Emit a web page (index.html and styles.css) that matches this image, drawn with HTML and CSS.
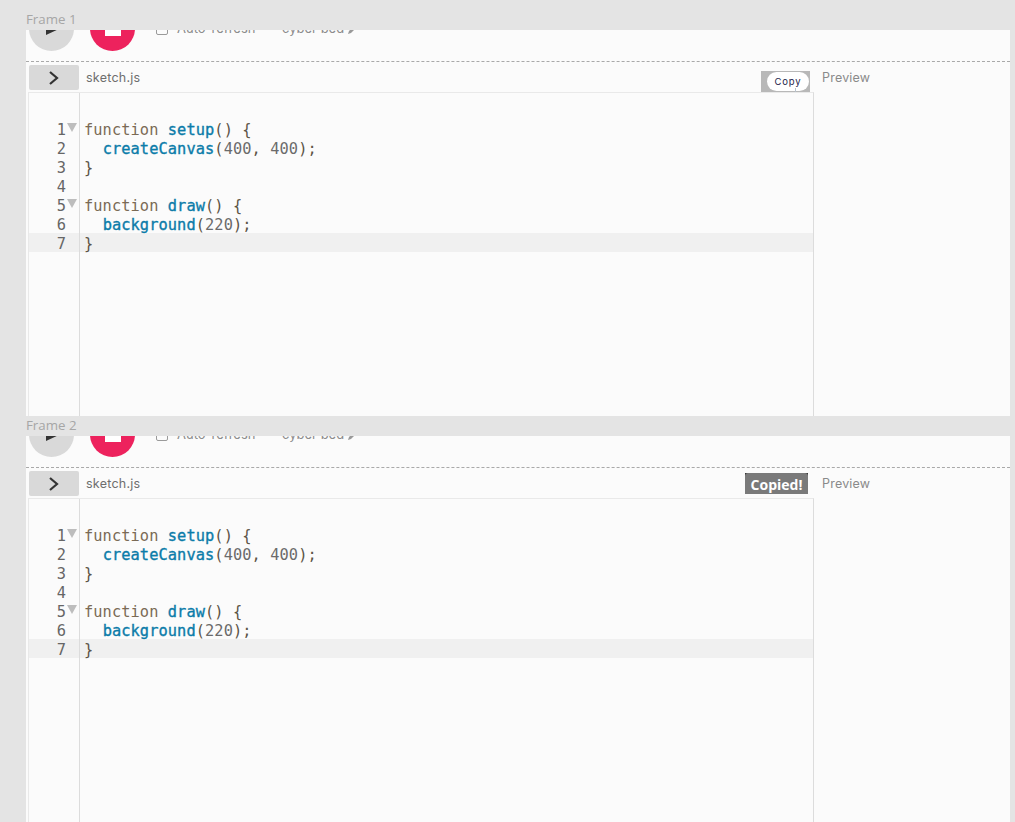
FILE: index.html
```html
<!DOCTYPE html>
<html lang="en">
<head>
<meta charset="utf-8">
<title>Frames</title>
<link rel="stylesheet" href="styles.css">
</head>
<body>
<div class="frame-label first">Frame 1</div>
<section class="frame">
  <div class="toolbar">
    <button class="round play"><svg width="16" height="14" viewBox="0 0 16 14"><path d="M1 0L15 6.5L1 13Z" fill="#333"/></svg></button>
    <button class="round stop"><span class="stop-square"></span></button>
    <span class="check"></span><span class="tool-text auto">Auto-refresh</span>
    <span class="tool-text name">cyber bed</span>
    <svg class="pencil" width="8" height="8" viewBox="0 0 8 8"><path d="M1 7L2 4L5 1L7 3L4 6Z" fill="#999"/></svg>
  </div>
  <div class="workspace">
    <div class="editor-pane">
      <div class="editor-head">
        <button class="collapse"><svg width="10" height="14" viewBox="0 0 10 14"><path d="M1 1L8 7L1 13" fill="none" stroke="#333" stroke-width="2.2"/></svg></button>
        <span class="file">sketch.js</span>
        <div class="copy"><span class="copy-pill">Copy</span><span class="ibeam"></span></div>
      </div>
      <div class="editor">
        <div class="line"><span class="num">1<i class="fold"></i></span><code><span class="kw">function</span> <span class="def">setup</span>() {</code></div>
        <div class="line"><span class="num">2</span><code>  <span class="def">createCanvas</span>(<span class="n">400</span>, <span class="n">400</span>);</code></div>
        <div class="line"><span class="num">3</span><code>}</code></div>
        <div class="line"><span class="num">4</span><code></code></div>
        <div class="line"><span class="num">5<i class="fold"></i></span><code><span class="kw">function</span> <span class="def">draw</span>() {</code></div>
        <div class="line"><span class="num">6</span><code>  <span class="def">background</span>(<span class="n">220</span>);</code></div>
        <div class="line active"><span class="num">7</span><code>}</code></div>
      </div>
    </div>
    <div class="preview">Preview</div>
  </div>
</section>
<div class="frame-label">Frame 2</div>
<section class="frame">
  <div class="toolbar">
    <button class="round play"><svg width="16" height="14" viewBox="0 0 16 14"><path d="M1 0L15 6.5L1 13Z" fill="#333"/></svg></button>
    <button class="round stop"><span class="stop-square"></span></button>
    <span class="check"></span><span class="tool-text auto">Auto-refresh</span>
    <span class="tool-text name">cyber bed</span>
    <svg class="pencil" width="8" height="8" viewBox="0 0 8 8"><path d="M1 7L2 4L5 1L7 3L4 6Z" fill="#999"/></svg>
  </div>
  <div class="workspace">
    <div class="editor-pane">
      <div class="editor-head">
        <button class="collapse"><svg width="10" height="14" viewBox="0 0 10 14"><path d="M1 1L8 7L1 13" fill="none" stroke="#333" stroke-width="2.2"/></svg></button>
        <span class="file">sketch.js</span>
        <div class="copied"><span class="copied-inner">Copied!</span></div>
      </div>
      <div class="editor">
        <div class="line"><span class="num">1<i class="fold"></i></span><code><span class="kw">function</span> <span class="def">setup</span>() {</code></div>
        <div class="line"><span class="num">2</span><code>  <span class="def">createCanvas</span>(<span class="n">400</span>, <span class="n">400</span>);</code></div>
        <div class="line"><span class="num">3</span><code>}</code></div>
        <div class="line"><span class="num">4</span><code></code></div>
        <div class="line"><span class="num">5<i class="fold"></i></span><code><span class="kw">function</span> <span class="def">draw</span>() {</code></div>
        <div class="line"><span class="num">6</span><code>  <span class="def">background</span>(<span class="n">220</span>);</code></div>
        <div class="line active"><span class="num">7</span><code>}</code></div>
      </div>
    </div>
    <div class="preview">Preview</div>
  </div>
</section>
</body>
</html>
```
FILE: styles.css
```css
* { box-sizing: border-box; }
html, body { margin: 0; height: 822px; overflow: hidden; }
body {
  background: #e4e4e4;
  padding: 0 5px 0 26px;
  font-family: Inter, "Liberation Sans", sans-serif;
}
.frame-label {
  height: 20px;
  font: 13.3px/19px "Open Sans", sans-serif;
  color: #a6a6a6;
}
.frame-label.first { height: 30px; padding-top: 10px; }
.frame {
  height: 386px;
  background: #fbfbfb;
  overflow: hidden;
}
.toolbar {
  height: 32px;
  padding: 0 0 10px 3px;
  display: flex;
  align-items: flex-end;
  border-bottom: 1px dashed #a9a9a9;
  overflow: hidden;
}
.round {
  flex: none;
  width: 45px;
  height: 45px;
  padding: 0;
  border: 0;
  border-radius: 50%;
  display: flex;
  align-items: center;
  justify-content: center;
}
.play { background: #d9d9d9; padding-left: 2px; }
.stop { background: #ed225d; margin-left: 16px; }
.stop-square { width: 16px; height: 14px; background: #fff; }
.check {
  flex: none;
  width: 12px;
  height: 12px;
  margin: 0 9px 16px 21px;
  border: 1px solid #9a9a9a;
  border-radius: 2px;
}
.tool-text {
  flex: none;
  font-size: 13px;
  line-height: 18px;
  margin-bottom: 14px;
  white-space: nowrap;
  color: #8c8c8c;
}
.auto { width: 78px; }
.name { margin-left: 27px; }
.pencil { flex: none; margin: 0 0 16px 3px; }
.workspace { display: flex; height: 100%; padding-left: 2px; }
.editor-pane { flex: none; width: 786px; }
.editor-head {
  height: 30px;
  padding: 3px 4px 0 1px;
  display: flex;
  align-items: flex-start;
}
.collapse {
  flex: none;
  width: 50px;
  height: 25px;
  padding: 0;
  border: 0;
  border-radius: 2px;
  background: #d9d9d9;
  display: flex;
  align-items: center;
  justify-content: center;
}
.file {
  margin-left: 7px;
  font-size: 12.5px;
  line-height: 26px;
  letter-spacing: .25px;
  color: #6e6e6e;
}
.copy {
  position: relative;
  flex: none;
  width: 49px;
  height: 21px;
  margin: 6px 0 0 auto;
  padding-left: 6px;
  background: #b8b8b8;
}
.copy-pill {
  display: block;
  width: 42px;
  height: 19px;
  margin-top: 1px;
  border-radius: 10px;
  background: #fff;
  font: 9.5px/20px Inter, sans-serif;
  letter-spacing: .9px;
  text-align: center;
  color: #23234a;
}
.ibeam {
  position: absolute;
  left: 34px;
  top: 17px;
  width: 1px;
  height: 4px;
  background: #b8c2cc;
}
.copied {
  flex: none;
  width: 63px;
  height: 21px;
  margin: 2px 2px 0 auto;
  background: #333;
}
.copied-inner {
  display: block;
  height: 21px;
  border-radius: 3px 3px 0 0;
  background: #7a7a7a;
  font: 700 14px/23px "Open Sans", sans-serif;
  text-align: center;
  color: #fff;
}
.editor {
  height: 400px;
  padding-top: 26px;
  border-top: 1px solid #e9e9e9;
  border-left: 1px solid #e9e9e9;
  border-right: 1px solid #dcdcdc;
  background: linear-gradient(#dcdcdc, #dcdcdc) 50px 0 / 1px 100% no-repeat;
}
.line {
  display: flex;
  height: 19px;
}
.line.active { background: #f0f0f0; }
.num {
  position: relative;
  flex: none;
  width: 51px;
  padding: 2px 13px 0 0;
  border-right: 1px solid #dcdcdc;
  text-align: right;
  font: 15.33px/19px "DejaVu Sans Mono", monospace;
  color: #666;
}
.fold {
  position: absolute;
  left: 38px;
  top: 4px;
  width: 0;
  height: 0;
  border-left: 5px solid transparent;
  border-right: 5px solid transparent;
  border-top: 9px solid #bdbdbd;
}
code {
  padding: 2px 0 0 4px;
  white-space: pre;
  font: 15.33px/19px "DejaVu Sans Mono", monospace;
  letter-spacing: .08px;
  color: #5c5446;
}
.kw { color: #7a6a55; }
.def { color: #0b7ca9; -webkit-text-stroke: .35px #0b7ca9; }
.n { color: #6b6b6b; }
.preview {
  margin-left: 8px;
  font-size: 12.5px;
  line-height: 32px;
  letter-spacing: .2px;
  color: #8a8a8a;
}
```
